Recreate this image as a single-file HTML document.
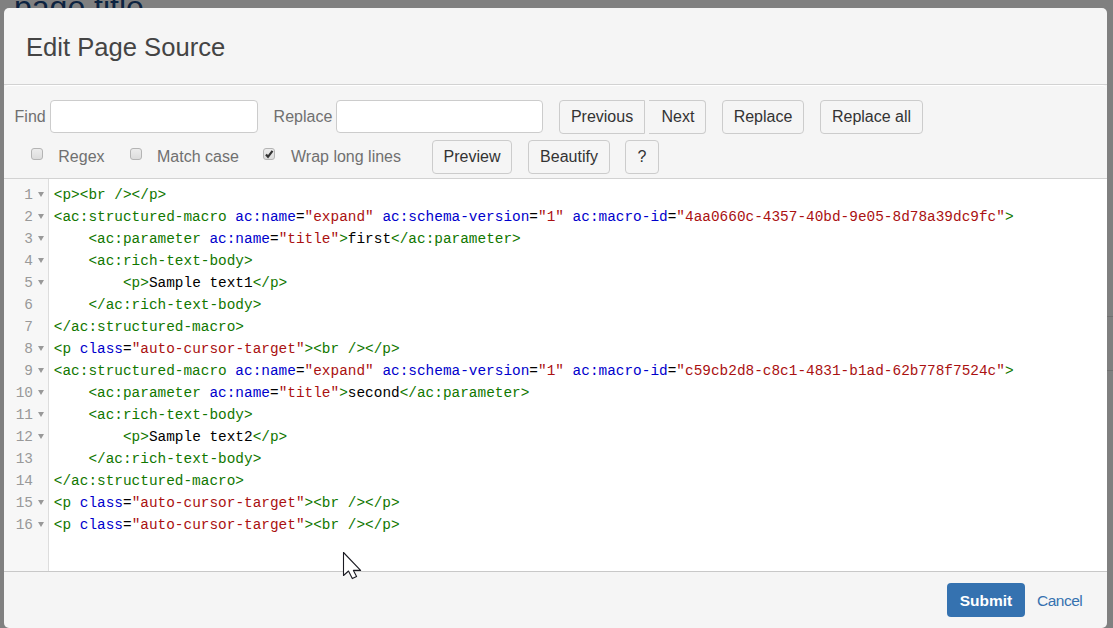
<!DOCTYPE html>
<html><head><meta charset="utf-8">
<style>
html,body{margin:0;padding:0;}
body{width:1113px;height:628px;overflow:hidden;background:#808080;position:relative;font-family:"Liberation Sans",sans-serif;}
.a0{position:absolute;white-space:nowrap;}
.pt{left:14px;top:-11.5px;font-size:32px;line-height:36px;color:#0c2340;}
.bgline{position:absolute;left:1107px;width:6px;height:1px;background:#707070;}
.modal{position:absolute;left:4px;top:8px;width:1103px;height:620px;background:#f5f5f5;border-radius:5px;}
.hl{position:absolute;left:4px;width:1103px;height:1px;}
.title{left:26px;top:31.5px;font-size:25.6px;line-height:30px;color:#444;}
.lbl{font-size:16px;line-height:18px;color:#707070;}
.inp{position:absolute;background:#fff;border:1px solid #ccc;border-radius:4px;box-sizing:border-box;}
.btn{position:absolute;box-sizing:border-box;border:1px solid #ccc;border-radius:4px;background:#f5f5f5;font-size:16px;line-height:18px;color:#333;text-align:center;padding-top:7px;}
.cb{position:absolute;width:12px;height:12px;box-sizing:border-box;border:1px solid #b4b4b4;border-radius:3px;background:linear-gradient(#ececec,#dcdcdc);}
.ed{position:absolute;left:4px;top:179px;width:1103px;height:392px;background:#fff;}
.gut{position:absolute;left:4px;top:179px;width:44px;height:392px;background:#f7f7f7;border-right:1px solid #ddd;}
.lns{position:absolute;left:4px;top:184px;width:44px;}
.ln{position:absolute;left:0;width:44px;height:22px;}
.ln span{position:absolute;right:15px;top:0;font-family:"Liberation Mono",monospace;font-size:14.415px;line-height:22px;color:#999;}
.ln i{position:absolute;left:34px;top:8px;width:0;height:0;border-left:3px solid transparent;border-right:3px solid transparent;border-top:5px solid #999;}
.code{position:absolute;left:53.8px;top:184px;font-family:"Liberation Mono",monospace;font-size:14.415px;line-height:22px;color:#000;white-space:pre;}
.cl{position:absolute;left:0;height:22px;}
.t{color:#170}.a{color:#00c}.s{color:#a11}
.sub{position:absolute;left:947px;top:583px;width:78px;height:34px;padding-top:1px;box-sizing:border-box;background:#3572b0;border-radius:4px;color:#fff;font-weight:bold;font-size:15.5px;line-height:34px;text-align:center;}
.can{left:1037px;top:583.5px;line-height:34px;font-size:15.5px;letter-spacing:-0.5px;color:#3572b0;}
</style></head><body>
<div class="a0 pt">page title</div>
<div class="bgline" style="top:316px"></div>
<div class="bgline" style="top:370px"></div>
<div class="modal"></div>
<div class="hl" style="top:84px;background:#d2d2d2"></div>
<div style="position:absolute;top:85px;left:5px;width:1101px;height:8px;border-top:1px solid #fff;border-radius:4px 4px 0 0;box-sizing:border-box"></div>
<div class="a0 title">Edit Page Source</div>
<div class="a0 lbl" style="left:14.6px;top:107.7px">Find</div>
<div class="inp" style="left:50px;top:100px;width:208px;height:33px"></div>
<div class="a0 lbl" style="left:273.6px;top:107.7px">Replace</div>
<div class="inp" style="left:336px;top:100px;width:207px;height:33px"></div>
<div class="btn" style="left:559px;top:100px;width:86px;height:34px;border-radius:4px 0 0 4px">Previous</div>
<div class="btn" style="left:649px;top:100px;width:57px;height:34px;border-left:0;border-radius:0 4px 4px 0;padding-left:2px">Next</div>
<div class="btn" style="left:722px;top:100px;width:82px;height:34px">Replace</div>
<div class="btn" style="left:820px;top:100px;width:103px;height:34px">Replace all</div>
<div class="cb" style="left:31px;top:148px"></div>
<div class="a0 lbl" style="left:58.3px;top:148.2px">Regex</div>
<div class="cb" style="left:130px;top:148px"></div>
<div class="a0 lbl" style="left:157px;top:148.2px">Match case</div>
<div class="cb" style="left:263px;top:148px"></div>
<svg class="a0" style="left:263px;top:148px" width="12" height="12"><path d="M3 6.5 L5 8.8 L9.5 2.8" fill="none" stroke="#333" stroke-width="2.2"/></svg>
<div class="a0 lbl" style="left:291px;top:148.2px">Wrap long lines</div>
<div class="btn" style="left:432px;top:140px;width:80px;height:34px">Preview</div>
<div class="btn" style="left:528px;top:140px;width:82px;height:34px">Beautify</div>
<div class="btn" style="left:625px;top:140px;width:34px;height:34px">?</div>
<div class="hl" style="top:178px;background:#d2d2d2"></div>
<div class="ed"></div>
<div class="gut"></div>
<div class="lns">
<div class="ln" style="top:0px"><span>1</span><i></i></div>
<div class="ln" style="top:22px"><span>2</span><i></i></div>
<div class="ln" style="top:44px"><span>3</span><i></i></div>
<div class="ln" style="top:66px"><span>4</span><i></i></div>
<div class="ln" style="top:88px"><span>5</span><i></i></div>
<div class="ln" style="top:110px"><span>6</span></div>
<div class="ln" style="top:132px"><span>7</span></div>
<div class="ln" style="top:154px"><span>8</span><i></i></div>
<div class="ln" style="top:176px"><span>9</span><i></i></div>
<div class="ln" style="top:198px"><span>10</span><i></i></div>
<div class="ln" style="top:220px"><span>11</span><i></i></div>
<div class="ln" style="top:242px"><span>12</span><i></i></div>
<div class="ln" style="top:264px"><span>13</span></div>
<div class="ln" style="top:286px"><span>14</span></div>
<div class="ln" style="top:308px"><span>15</span><i></i></div>
<div class="ln" style="top:330px"><span>16</span><i></i></div>
</div>
<div class="code">
<div class="cl" style="top:0px"><span class="t">&lt;p&gt;&lt;br /&gt;&lt;/p&gt;</span></div>
<div class="cl" style="top:22px"><span class="t">&lt;ac:structured-macro</span> <span class="a">ac:name</span>=<span class="s">&quot;expand&quot;</span> <span class="a">ac:schema-version</span>=<span class="s">&quot;1&quot;</span> <span class="a">ac:macro-id</span>=<span class="s">&quot;4aa0660c-4357-40bd-9e05-8d78a39dc9fc&quot;</span><span class="t">&gt;</span></div>
<div class="cl" style="top:44px">    <span class="t">&lt;ac:parameter</span> <span class="a">ac:name</span>=<span class="s">&quot;title&quot;</span><span class="t">&gt;</span>first<span class="t">&lt;/ac:parameter&gt;</span></div>
<div class="cl" style="top:66px">    <span class="t">&lt;ac:rich-text-body&gt;</span></div>
<div class="cl" style="top:88px">        <span class="t">&lt;p&gt;</span>Sample text1<span class="t">&lt;/p&gt;</span></div>
<div class="cl" style="top:110px">    <span class="t">&lt;/ac:rich-text-body&gt;</span></div>
<div class="cl" style="top:132px"><span class="t">&lt;/ac:structured-macro&gt;</span></div>
<div class="cl" style="top:154px"><span class="t">&lt;p</span> <span class="a">class</span>=<span class="s">&quot;auto-cursor-target&quot;</span><span class="t">&gt;&lt;br /&gt;&lt;/p&gt;</span></div>
<div class="cl" style="top:176px"><span class="t">&lt;ac:structured-macro</span> <span class="a">ac:name</span>=<span class="s">&quot;expand&quot;</span> <span class="a">ac:schema-version</span>=<span class="s">&quot;1&quot;</span> <span class="a">ac:macro-id</span>=<span class="s">&quot;c59cb2d8-c8c1-4831-b1ad-62b778f7524c&quot;</span><span class="t">&gt;</span></div>
<div class="cl" style="top:198px">    <span class="t">&lt;ac:parameter</span> <span class="a">ac:name</span>=<span class="s">&quot;title&quot;</span><span class="t">&gt;</span>second<span class="t">&lt;/ac:parameter&gt;</span></div>
<div class="cl" style="top:220px">    <span class="t">&lt;ac:rich-text-body&gt;</span></div>
<div class="cl" style="top:242px">        <span class="t">&lt;p&gt;</span>Sample text2<span class="t">&lt;/p&gt;</span></div>
<div class="cl" style="top:264px">    <span class="t">&lt;/ac:rich-text-body&gt;</span></div>
<div class="cl" style="top:286px"><span class="t">&lt;/ac:structured-macro&gt;</span></div>
<div class="cl" style="top:308px"><span class="t">&lt;p</span> <span class="a">class</span>=<span class="s">&quot;auto-cursor-target&quot;</span><span class="t">&gt;&lt;br /&gt;&lt;/p&gt;</span></div>
<div class="cl" style="top:330px"><span class="t">&lt;p</span> <span class="a">class</span>=<span class="s">&quot;auto-cursor-target&quot;</span><span class="t">&gt;&lt;br /&gt;&lt;/p&gt;</span></div>
</div>
<div class="hl" style="top:571px;background:#c8c8c8"></div>
<div class="sub">Submit</div>
<div class="a0 can">Cancel</div>
<svg class="a0" style="left:0;top:0" width="1113" height="628"><path d="M343.5 552.5 L343.5 575.5 L348.5 571 L352.3 578.6 L356.6 576.6 L353.4 570.4 L360.6 570.4 Z" fill="#fff" stroke="#1a1a22" stroke-width="1.1" stroke-linejoin="round"/></svg>
</body></html>
